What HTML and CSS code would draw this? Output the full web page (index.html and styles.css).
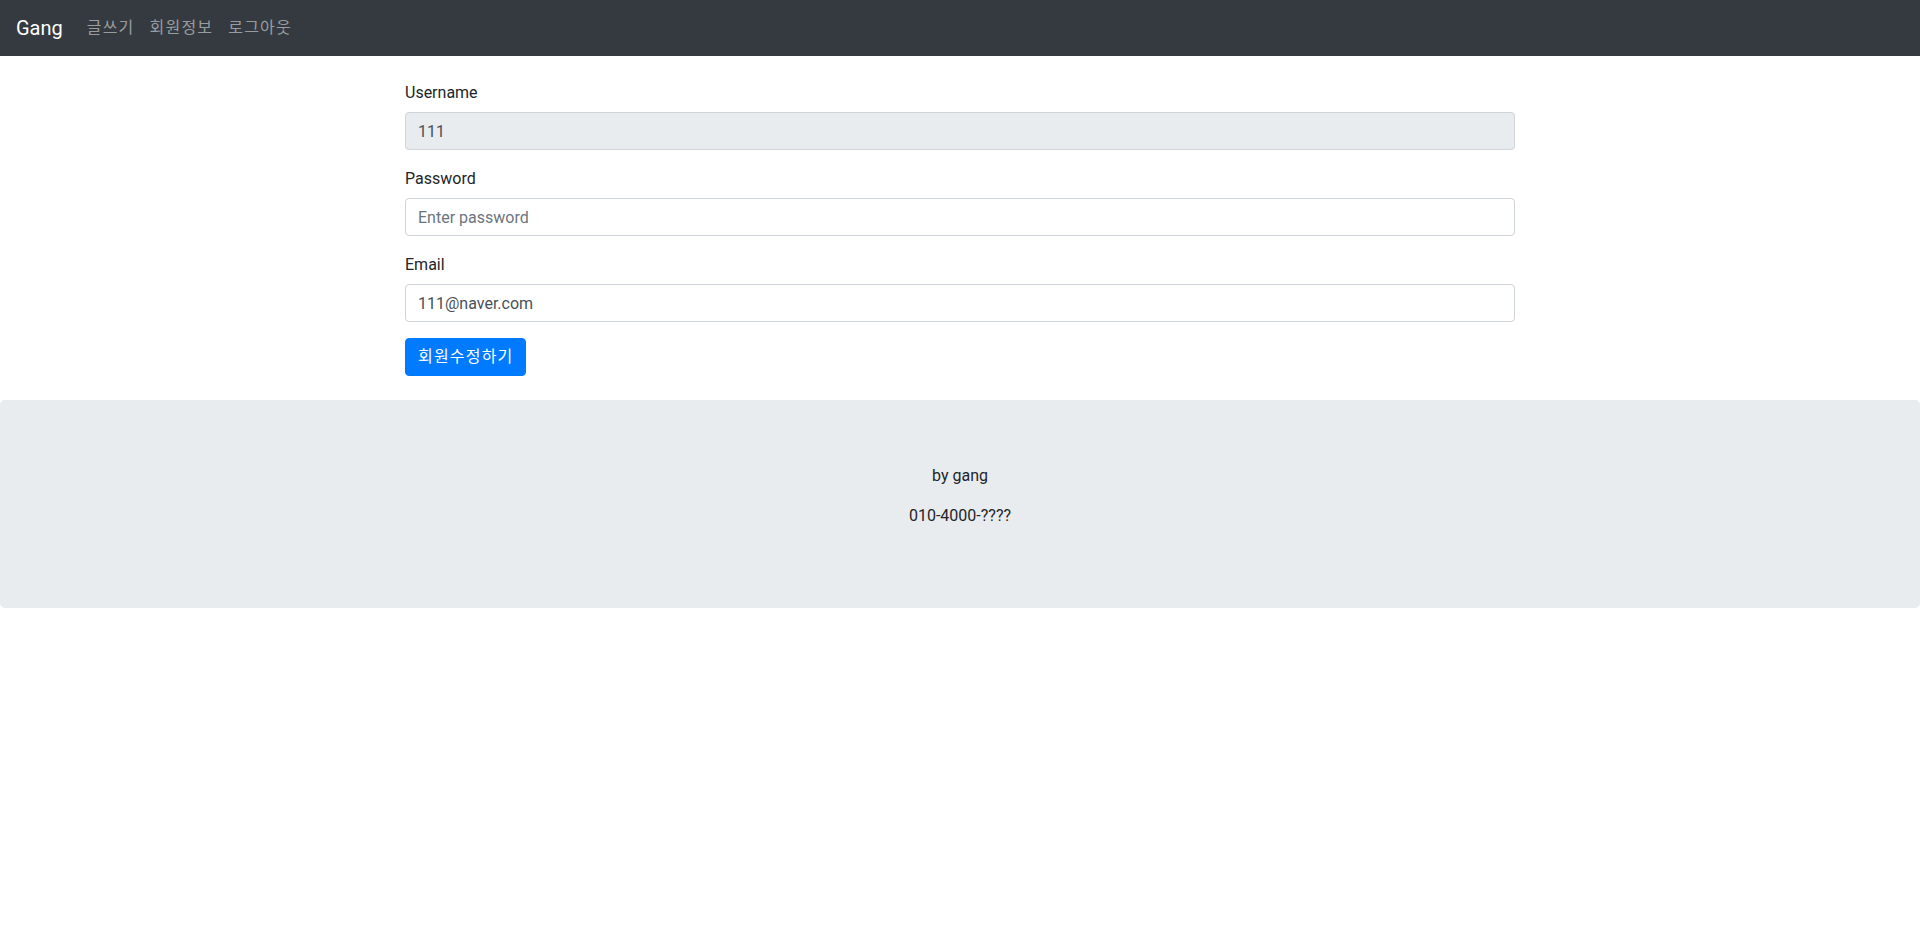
FILE: index.html
```html
<!DOCTYPE html>
<html lang="ko">
<head>
<meta charset="utf-8">
<title>Gang</title>
<link rel="stylesheet" href="styles.css">
</head>
<body>
<nav class="navbar">
  <a class="brand" href="#">Gang</a>
  <ul class="nav">
    <li><a class="nav-link ko" href="#">글쓰기</a></li>
    <li><a class="nav-link ko" href="#">회원정보</a></li>
    <li><a class="nav-link ko" href="#">로그아웃</a></li>
  </ul>
</nav>
<div class="container">
  <form class="form">
    <div class="form-group">
      <label class="label" for="username">Username</label>
      <input class="form-control" id="username" type="text" value="111" readonly>
    </div>
    <div class="form-group">
      <label class="label" for="password">Password</label>
      <input class="form-control" id="password" type="password" placeholder="Enter password">
    </div>
    <div class="form-group">
      <label class="label" for="email">Email</label>
      <input class="form-control" id="email" type="email" value="111@naver.com">
    </div>
    <button class="btn ko" type="button">회원수정하기</button>
  </form>
</div>
<footer class="jumbotron">
  <p>by gang</p>
  <p>010-4000-????</p>
</footer>
</body>
</html>
```

FILE: styles.css
```css
* { box-sizing: border-box; }
html, body {
  margin: 0;
  padding: 0;
}
body {
  font-family: "Segoe UI", Roboto, "Noto Sans CJK KR", "Noto Sans", sans-serif;
  font-size: 16px;
  line-height: 1.5;
  color: #212529;
  background: #fff;
}
.ko { letter-spacing: 1.2px; }
.navbar {
  display: flex;
  align-items: center;
  height: 56px;
  padding: 8px 16px;
  background: #343a40;
}
.brand {
  font-size: 20px;
  line-height: 30px;
  color: #fff;
  text-decoration: none;
  margin-right: 16px;
  padding: 5px 0;
}
.nav {
  display: flex;
  list-style: none;
  margin: 0;
  padding: 0;
}
.nav-link {
  display: block;
  padding: 8px 7px 8px 8px;
  color: rgba(255,255,255,.5);
  text-decoration: none;
}
.container {
  width: 1140px;
  margin: 24px auto 24px;
  padding: 0 15px;
}
.form { margin: 0; }
.form-group { margin-bottom: 16px; }
.label {
  display: inline-block;
  margin-bottom: 8px;
  padding-top: 1px;
}
.form-control {
  display: block;
  width: 100%;
  height: 38px;
  margin-top: -1px;
  padding: 6px 12px;
  font-family: inherit;
  font-size: 16px;
  line-height: 1.5;
  color: #495057;
  background: #fff;
  border: 1px solid #ced4da;
  border-radius: 4px;
  outline: none;
}
.form-control[readonly] { background: #e9ecef; }
.form-control::placeholder { color: #6c757d; opacity: 1; }
.btn {
  display: inline-block;
  height: 38px;
  padding: 6px 11px 6px 12px;
  font-family: inherit;
  font-size: 16px;
  line-height: 1.5;
  color: #fff;
  background: #007bff;
  border: 1px solid #007bff;
  border-radius: 4px;
  cursor: pointer;
}
.jumbotron {
  display: block;
  padding: 64px 32px;
  margin: 0 0 32px;
  background: #e9ecef;
  border-radius: 4.8px;
  text-align: center;
}
.jumbotron p {
  margin: 0 0 16px;
}
```
